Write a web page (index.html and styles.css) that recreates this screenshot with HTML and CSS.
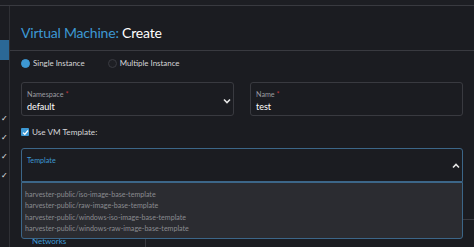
FILE: index.html
```html
<!DOCTYPE html>
<html lang="en">
<head>
    <meta charset="UTF-8">
    <meta name="viewport" content="width=device-width, initial-scale=1.0">
    <title>Virtual Machine: Create</title>
    <link rel="stylesheet" href="styles.css">
</head>
<body>
    <!-- top header -->
    <div class="header"></div>

    <div class="layout">
        <!-- side nav -->
        <div class="sidebar">
            <div class="nav-active"></div>
            <div class="nav-checks">
                <span class="check">&#10003;</span>
                <span class="check">&#10003;</span>
                <span class="check">&#10003;</span>
                <span class="check">&#10003;</span>
            </div>
        </div>

        <div class="main">
            <h1 class="title"><span class="title-type">Virtual Machine:</span> Create</h1>

            <div class="content">
                <div class="radio-group">
                    <label class="radio checked"><span class="radio-dot"></span>Single Instance</label>
                    <label class="radio"><span class="radio-dot"></span>Multiple Instance</label>
                </div>

                <div class="row">
                    <div class="field select">
                        <div class="field-label">Namespace <span class="required">*</span></div>
                        <div class="field-value">default</div>
                        <svg class="chevron" width="8" height="6" viewBox="0 0 8 6">
                            <path d="M1 1.5 L4 4.5 L7 1.5" fill="none" stroke="#e6e6e6" stroke-width="1.6"/>
                        </svg>
                    </div>
                    <div class="field">
                        <div class="field-label">Name <span class="required">*</span></div>
                        <div class="field-value">test</div>
                    </div>
                </div>

                <label class="checkbox">
                    <span class="checkbox-box">
                        <svg width="7" height="7" viewBox="0 0 7 7">
                            <path d="M1 3.6 L2.8 5.3 L6 1.5" fill="none" stroke="#fff" stroke-width="1.3"/>
                        </svg>
                    </span>
                    Use VM Template:
                </label>

                <div class="field template open">
                    <div class="field-label focus">Template</div>
                    <svg class="chevron up" width="8" height="6" viewBox="0 0 8 6">
                        <path d="M1 4.5 L4 1.5 L7 4.5" fill="none" stroke="#e6e6e6" stroke-width="1.6"/>
                    </svg>
                    <ul class="dropdown">
                        <li>harvester-public/iso-image-base-template</li>
                        <li>harvester-public/raw-image-base-template</li>
                        <li>harvester-public/windows-iso-image-base-template</li>
                        <li>harvester-public/windows-raw-image-base-template</li>
                    </ul>
                </div>

                <div class="tabs">
                    <div class="tab-list">
                        <a class="tab">Networks</a>
                    </div>
                    <div class="tab-panel"></div>
                </div>
            </div>
        </div>
    </div>
</body>
</html>
```

FILE: styles.css
```css
body {
    margin: 0;
    background-color: #1b1c21;
    color: #e8e8ea;
    font-family: Lato, 'Noto Sans', sans-serif;
    overflow: hidden;
    height: 247px;
}

.header {
    height: 5px;
    background-color: #1d1e23;
    border-bottom: 1px solid #393a40;
}

.layout {
    display: flex;
    height: 241px;
}

/* 侧边栏 */
.sidebar {
    width: 9px;
    border-right: 1px solid #2f3035;
    flex-shrink: 0;
}

.nav-active {
    margin-top: 34px;
    height: 20px;
    background-color: #2b6896;
}

.nav-checks {
    display: flex;
    flex-direction: column;
    margin-top: 52px;
    padding-left: 1px;
}

.check {
    display: block;
    height: 19px;
    font-size: 8px;
    line-height: 12px;
    color: #e8e8ea;
}

.main {
    flex: 1;
}

.title {
    margin: 0;
    padding: 17px 11px 0;
    height: 27px;
    font-size: 14px;
    font-weight: 400;
    letter-spacing: -0.2px;
    line-height: 20px;
    color: #ffffff;
    border-bottom: 1px solid #393a40;
}

.title-type {
    color: #3d98d3;
}

.content {
    padding: 0 11px;
}

.radio-group {
    display: flex;
    gap: 23px;
    margin-top: 7px;
    height: 10px;
    align-items: center;
}

.radio {
    display: flex;
    align-items: center;
    font-size: 7.9px;
    color: #d6d6d8;
}

.radio-dot {
    width: 7px;
    height: 7px;
    border-radius: 50%;
    border: 1px solid #3a3b41;
    background-color: #1e1f24;
    margin-right: 3px;
}

.radio.checked .radio-dot {
    background-color: #3d98d3;
    border-color: #3d98d3;
}

.row {
    display: flex;
    gap: 16px;
    margin-top: 14px;
}

.field {
    position: relative;
    flex: 1;
    border: 1px solid #393a40;
    border-radius: 3px;
    padding: 0 5px;
    box-sizing: border-box;
    height: 34px;
}

.field-label {
    font-size: 7.2px;
    color: #9a9ba0;
    margin-top: 7px;
    line-height: 9px;
}

.field-label.focus {
    color: #3d98d3;
}

.required {
    color: #c4363b;
}

.field-value {
    font-size: 9px;
    color: #ffffff;
    margin-top: 2px;
    line-height: 12px;
}

.chevron {
    position: absolute;
    right: 2px;
    top: 15px;
}

.chevron.up {
    right: 2px;
    top: 14px;
}

.checkbox {
    display: flex;
    align-items: center;
    margin-top: 11px;
    height: 10px;
    font-size: 8.2px;
    color: #d6d6d8;
}

.checkbox-box {
    display: flex;
    align-items: center;
    justify-content: center;
    width: 8px;
    height: 8px;
    border-radius: 1px;
    background-color: #3d98d3;
    margin-right: 3px;
}

.template {
    margin-top: 11px;
    border-color: #3c6688;
    border-radius: 3px 3px 0 0;
    z-index: 2;
}

.dropdown {
    position: absolute;
    left: -1px;
    right: -1px;
    top: 33px;
    margin: 0;
    padding: 6px 3px 4px;
    list-style: none;
    background-color: #2b2c31;
    border: 1px solid #3c6688;
    border-radius: 0 0 3px 3px;
}

.dropdown li {
    font-size: 7.1px;
    line-height: 11.3px;
    color: #8a8b90;
}

.tabs {
    display: flex;
    margin-top: 37px;
    height: 30px;
    margin-right: -11px;
}

.tab-list {
    width: 124px;
    padding-top: 9px;
    padding-left: 11px;
    box-sizing: border-box;
}

.tab {
    font-size: 8px;
    line-height: 10px;
    color: #3d98d3;
}

.tab-panel {
    flex: 1;
    border-left: 1px solid #393a40;
    border-top: 1px solid #393a40;
}
```
